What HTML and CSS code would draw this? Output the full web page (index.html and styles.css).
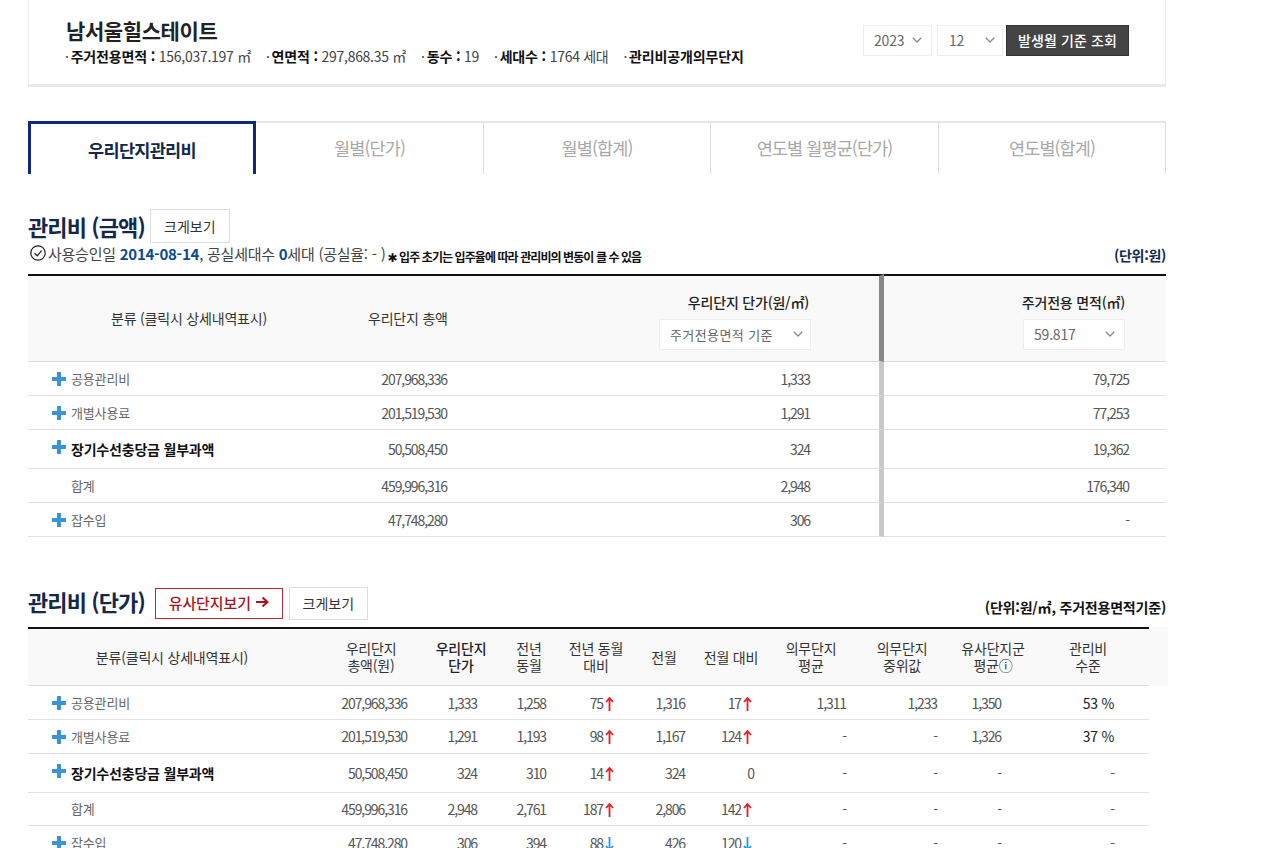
FILE: index.html
```html
<!DOCTYPE html>
<html lang="ko">
<head>
<meta charset="utf-8">
<title>관리비</title>
<link rel="stylesheet" href="styles.css">
</head>
<body>
<svg class="defs" width="0" height="0" aria-hidden="true">
  <symbol id="chev" viewBox="0 0 10 6"><path d="M.8.8 5 5 9.2.8" fill="none" stroke="#888" stroke-width="1.3"/></symbol>
  <symbol id="up" viewBox="0 0 9 14"><path d="M4.5 14V1.5M1 5l3.5-4L8 5" fill="none" stroke="#ee1c25" stroke-width="1.8"/></symbol>
  <symbol id="down" viewBox="0 0 9 14"><path d="M4.5 0v12.5M1 9l3.5 4L8 9" fill="none" stroke="#1e9be8" stroke-width="1.8"/></symbol>
</svg>
<main class="page">
  <section class="card">
    <div class="card-info">
      <h1 class="apt-name">남서울힐스테이트</h1>
      <ul class="facts">
        <li><b>주거전용면적 :</b> 156,037.197 ㎡</li>
        <li><b>연면적 :</b> 297,868.35 ㎡</li>
        <li><b>동수 :</b> 19</li>
        <li><b>세대수 :</b> 1764 세대</li>
        <li><b>관리비공개의무단지</b></li>
      </ul>
    </div>
    <div class="controls">
      <div class="select year">2023<svg class="chev"><use href="#chev"/></svg></div>
      <div class="select month">12<svg class="chev"><use href="#chev"/></svg></div>
      <button class="query">발생월 기준 조회</button>
    </div>
  </section>

  <nav class="tabs">
    <a class="tab active">우리단지관리비</a>
    <a class="tab">월별(단가)</a>
    <a class="tab">월별(합계)</a>
    <a class="tab">연도별 월평균(단가)</a>
    <a class="tab">연도별(합계)</a>
  </nav>

  <section class="amount">
    <div class="sec-head">
      <h2 class="sec-title">관리비 (금액)</h2>
      <button class="btn">크게보기</button>
    </div>
    <div class="meta">
      <svg class="check" viewBox="0 0 16 16"><circle cx="8" cy="8" r="7.2" fill="none" stroke="#222" stroke-width="1.2"/><path d="M4.6 8.2 7.2 10.8 11.6 5.6" fill="none" stroke="#222" stroke-width="1.3"/></svg>
      <span class="meta-text">사용승인일 <b class="hl">2014-08-14</b>, 공실세대수 <b class="hl">0</b>세대 (공실율: - )</span>
      <span class="note"><span class="star">✱</span> 입주 초기는 입주율에 따라 관리비의 변동이 클 수 있음</span>
      <span class="unit unit-1">(단위:원)</span>
    </div>
    <table class="tbl tbl-amount">
      <colgroup><col class="a1"><col class="a2"><col class="a3"><col class="a4"></colgroup>
      <thead>
        <tr>
          <th>분류 (클릭시 상세내역표시)</th>
          <th>우리단지 총액</th>
          <th class="th-sel"><b class="th-strong">우리단지 단가(원/㎡)</b><div class="select sel-basis">주거전용면적 기준<svg class="chev"><use href="#chev"/></svg></div></th>
          <th class="th-sel"><b class="th-strong">주거전용 면적(㎡)</b><div class="select sel-area">59.817<svg class="chev"><use href="#chev"/></svg></div></th>
        </tr>
      </thead>
      <tbody>
        <tr><td class="name"><i class="plus"></i>공용관리비</td><td>207,968,336</td><td>1,333</td><td>79,725</td></tr>
        <tr><td class="name"><i class="plus"></i>개별사용료</td><td>201,519,530</td><td>1,291</td><td>77,253</td></tr>
        <tr class="tall"><td class="name strong"><i class="plus"></i>장기수선충당금 월부과액</td><td>50,508,450</td><td>324</td><td>19,362</td></tr>
        <tr><td class="name"><i class="noplus"></i>합계</td><td>459,996,316</td><td>2,948</td><td>176,340</td></tr>
        <tr><td class="name"><i class="plus"></i>잡수입</td><td>47,748,280</td><td>306</td><td>-</td></tr>
      </tbody>
    </table>
  </section>

  <section class="unit-price">
    <div class="sec-head head-2">
      <h2 class="sec-title">관리비 (단가)</h2>
      <button class="btn btn-red">유사단지보기<svg class="btn-arrow" viewBox="0 0 14 12"><path d="M1 6h11M7.500 1.500 12.500 6l-5 4.500" fill="none" stroke="#a8141c" stroke-width="2"/></svg></button>
      <button class="btn btn-2">크게보기</button>
      <span class="unit unit-2">(단위:원/㎡, 주거전용면적기준)</span>
    </div>
    <table class="tbl tbl-unit">
      <colgroup><col class="u1"><col class="u2"><col class="u3"><col class="u4"><col class="u5"><col class="u6"><col class="u7"><col class="u8"><col class="u9"><col class="u10"><col class="u11"></colgroup>
      <thead>
        <tr>
          <th>분류(클릭시 상세내역표시)</th><th>우리단지<br>총액(원)</th><th><b class="th-strong">우리단지<br>단가</b></th><th>전년<br>동월</th><th>전년 동월<br>대비</th><th>전월</th><th>전월 대비</th><th>의무단지<br>평균</th><th>의무단지<br>중위값</th><th>유사단지군<br>평균ⓘ</th><th>관리비<br>수준</th>
        </tr>
      </thead>
      <tbody>
        <tr><td class="name"><i class="plus"></i>공용관리비</td><td>207,968,336</td><td>1,333</td><td>1,258</td><td>75<svg class="arr"><use href="#up"/></svg></td><td>1,316</td><td>17<svg class="arr"><use href="#up"/></svg></td><td>1,311</td><td>1,233</td><td>1,350</td><td class="pct">53 %</td></tr>
        <tr class="lift"><td class="name"><i class="plus"></i>개별사용료</td><td>201,519,530</td><td>1,291</td><td>1,193</td><td>98<svg class="arr"><use href="#up"/></svg></td><td>1,167</td><td>124<svg class="arr"><use href="#up"/></svg></td><td>-</td><td>-</td><td>1,326</td><td class="pct">37 %</td></tr>
        <tr class="tall lift"><td class="name strong"><i class="plus"></i>장기수선충당금 월부과액</td><td>50,508,450</td><td>324</td><td>310</td><td>14<svg class="arr"><use href="#up"/></svg></td><td>324</td><td class="zero">0</td><td>-</td><td>-</td><td>-</td><td>-</td></tr>
        <tr class="short lift"><td class="name"><i class="noplus"></i>합계</td><td>459,996,316</td><td>2,948</td><td>2,761</td><td>187<svg class="arr"><use href="#up"/></svg></td><td>2,806</td><td>142<svg class="arr"><use href="#up"/></svg></td><td>-</td><td>-</td><td>-</td><td>-</td></tr>
        <tr><td class="name"><i class="plus"></i>잡수입</td><td>47,748,280</td><td>306</td><td>394</td><td>88<svg class="arr"><use href="#down"/></svg></td><td>426</td><td>120<svg class="arr"><use href="#down"/></svg></td><td>-</td><td>-</td><td>-</td><td>-</td></tr>
      </tbody>
    </table>
  </section>
</main>
</body>
</html>
```

FILE: styles.css
```css
* { box-sizing: border-box; }
html, body { margin: 0; height: 848px; overflow: hidden; background: #fff; }
body { font-family: "Noto Sans CJK KR", "Noto Sans", sans-serif; color: #555; font-size: 13px; }
.defs { position: absolute; }
.page { width: 1138px; margin-left: 28px; }

/* summary card */
.card { height: 87px; display: flex; justify-content: space-between; padding: 0 36px 0 37px; border: 1px solid #eee; border-top: 0; border-bottom: 3px solid #e9e9e9; }
.apt-name { margin: 16px 0 0; font-size: 21px; line-height: 28px; font-weight: 700; letter-spacing: -.4px; color: #222; }
.facts { display: flex; gap: 15px; margin: 2px 0 0 -1px; padding: 0; list-style: none; font-size: 14px; line-height: 20px; letter-spacing: -.28px; color: #444; white-space: nowrap; }
.facts li::before { content: "·"; margin-right: 2px; }
.facts b { color: #111; font-weight: 700; letter-spacing: -.15px; }
.controls { display: flex; align-items: flex-start; margin-top: 25px; }
.select { display: flex; align-items: center; justify-content: space-between; border: 1px solid #eee; background: #fff; color: #666; height: 31px; padding-bottom: 1px; font-size: 14px; letter-spacing: -.2px; font-weight: 400; }
.chev { width: 10px; height: 6px; flex: none; }
.year { width: 69px; padding: 0 9px 2px 10px; margin-right: 5px; }
.month { width: 66px; padding: 0 7px 2px 11px; margin-right: 3px; }
.query { width: 123px; height: 31px; border: 1px solid #333; background: #444; color: #fff; font: 500 14px "Noto Sans CJK KR", sans-serif; letter-spacing: .1px; padding: 0 0 2px; }

/* tabs */
.tabs { display: grid; grid-template-columns: 228px 227px 227px 228px 228px; height: 53px; margin-top: 34px; }
.tab { display: flex; align-items: center; justify-content: center; padding-bottom: 2px; border-top: 2px solid #e6e6e6; border-left: 1px solid #ddd; font-size: 17.5px; letter-spacing: -.9px; color: #a8a8a8; }
.tab:last-child { border-right: 1px solid #ddd; }
.tab.active + .tab { border-left: 0; }
.tab.active { border: 3px solid #0f2a7c; border-bottom: 0; padding-bottom: 0; color: #14284b; font-weight: 700; letter-spacing: -.7px; }

/* section heads */
.amount { margin-top: 34px; }
.sec-head { display: flex; align-items: center; height: 36px; }
.sec-title { margin: 0; font-size: 22px; line-height: 30px; font-weight: 700; letter-spacing: -.9px; color: #14284b; white-space: nowrap; }
.btn { height: 34px; border: 1px solid #ddd; background: #fff; color: #333; font: 400 14px "Noto Sans CJK KR", sans-serif; letter-spacing: 0; padding: 0; }
.sec-head .btn { width: 80px; margin-left: 5px; }
.meta { display: flex; align-items: center; height: 22px; margin-top: -2px; white-space: nowrap; }
.check { width: 16px; height: 16px; margin: 0 2px 0 2px; }
.meta-text { font-size: 15px; letter-spacing: -.25px; color: #444; }
.hl { color: #0b4a8f; font-weight: 700; }
.note { margin: 7px 0 0 2px; font-size: 12px; font-weight: 700; letter-spacing: -.92px; color: #111; }
.star { font: 700 12px "DejaVu Sans", sans-serif; line-height: 10px; }
.unit { margin-left: auto; font-size: 14px; font-weight: 700; letter-spacing: -.3px; color: #14284b; white-space: nowrap; }
.unit-1 { margin-top: 4px; }

/* tables */
.tbl { border-collapse: separate; border-spacing: 0; table-layout: fixed; }
.tbl th { background: #f9f9f9; font-weight: 400; color: #333; font-size: 14px; line-height: 17px; letter-spacing: -.2px; border-top: 2px solid #111; border-bottom: 1px solid #ddd; padding: 0; text-align: center; }
.tbl td { height: 34px; padding: 0; text-align: right; border-bottom: 1px solid #e2e2e2; font-size: 14px; letter-spacing: -1.1px; color: #555; white-space: nowrap; }
.tbl .tall td { height: 39px; }
.tbl td.name { text-align: left; letter-spacing: -.15px; font-size: 13px; color: #666; }
.tbl td.strong { font-size: 14px; font-weight: 700; color: #111; letter-spacing: -.2px; }
.plus { display: inline-block; width: 14px; height: 14px; margin: 0 5px 0 24px; vertical-align: -2px; background: linear-gradient(#3a94da, #3a94da) center/100% 4px no-repeat, linear-gradient(#3a94da, #3a94da) center/4px 100% no-repeat; }
.strong .plus { vertical-align: 1px; }
.noplus { display: inline-block; width: 14px; margin: 0 5px 0 24px; }
.th-strong { font-weight: 500; color: #222; }

/* amount table */
.tbl-amount { width: 1138px; margin-top: 10px; }
.a1 { width: 322px; } .a2 { width: 121px; } .a3 { width: 413px; } .a4 { width: 282px; }
.tbl-amount thead tr { height: 88px; }
.tbl-amount th:nth-child(2) { text-align: left; padding-left: 18px; }
.tbl-amount th:nth-child(3) { border-right: 5px solid #888; }
.tbl-amount td:nth-child(2) { padding-right: 24px; }
.tbl-amount td:nth-child(3) { padding-right: 69px; border-right: 5px solid #c8c8c8; }
.tbl-amount td:nth-child(4) { padding-right: 37px; }
.th-sel { text-align: right !important; vertical-align: top; padding-top: 16px !important; }
.tbl-amount th:nth-child(3) b { display: block; margin-right: 70px; line-height: 20px; }
.tbl-amount th:nth-child(4) b { display: block; margin-right: 41px; line-height: 20px; }
.sel-basis { width: 152px; margin: 7px 68px 0 auto; padding: 0 7px 1px 10px; font-size: 13px; letter-spacing: .4px; background: #fff; }
.sel-area { width: 102px; margin: 7px 41px 0 auto; padding: 0 9px 1px 10px; }

/* unit price table */
.unit-price { margin-top: 48px; }
.head-2 { height: 36px; }
.head-2 .sec-title { margin-bottom: 4px; }
.head-2 .btn-red { display: flex; align-items: center; justify-content: center; width: 128px; height: 31px; margin-left: 10px; padding: 0 0 2px; border-color: #c0262d; color: #a8141c; font-size: 15px; font-weight: 500; letter-spacing: -.1px; }
.btn-arrow { width: 14px; height: 12px; margin-left: 4px; }
.head-2 .btn-2 { width: 79px; height: 33px; margin-left: 6px; }
.unit-2 { margin-top: 8px; font-size: 14px; letter-spacing: -.2px; color: #111; }
.tbl-unit { width: 1121px; margin-top: 6px; }
.u1 { width: 288px; } .u2 { width: 110px; } .u3 { width: 70px; } .u4 { width: 66px; } .u5 { width: 68px; } .u6 { width: 68px; } .u7 { width: 66px; } .u8 { width: 94px; } .u9 { width: 88px; } .u10 { width: 94px; } .u11 { width: 109px; }
.tbl-unit thead tr { height: 59px; }
.tbl-unit .short td { height: 33px; }
.tbl-unit .lift td { padding-bottom: 1px; }
.tbl-unit th:last-child { position: relative; padding-right: 13px; }
.tbl-unit th:last-child::after { content: ""; position: absolute; left: 100%; top: -2px; bottom: -1px; width: 19px; background: #f9f9f9; }
.tbl-unit td:nth-child(2) { padding-right: 19px; }
.tbl-unit td:nth-child(3) { padding-right: 19px; }
.tbl-unit td:nth-child(4) { padding-right: 16px; }
.tbl-unit td:nth-child(5) { padding-right: 16px; }
.tbl-unit td:nth-child(6) { padding-right: 13px; }
.tbl-unit td:nth-child(7) { padding-right: 12px; }
.tbl-unit td:nth-child(8) { padding-right: 12px; }
.tbl-unit td:nth-child(9) { padding-right: 9px; }
.tbl-unit td:nth-child(10) { padding-right: 39px; }
.tbl-unit td:nth-child(11) { padding-right: 35px; }
.tbl-unit td.pct { color: #222; letter-spacing: -.3px; }
.tbl-unit td.zero { padding-right: 10px; }
.arr { width: 9px; height: 14px; margin-left: 2px; vertical-align: -2px; }
```
